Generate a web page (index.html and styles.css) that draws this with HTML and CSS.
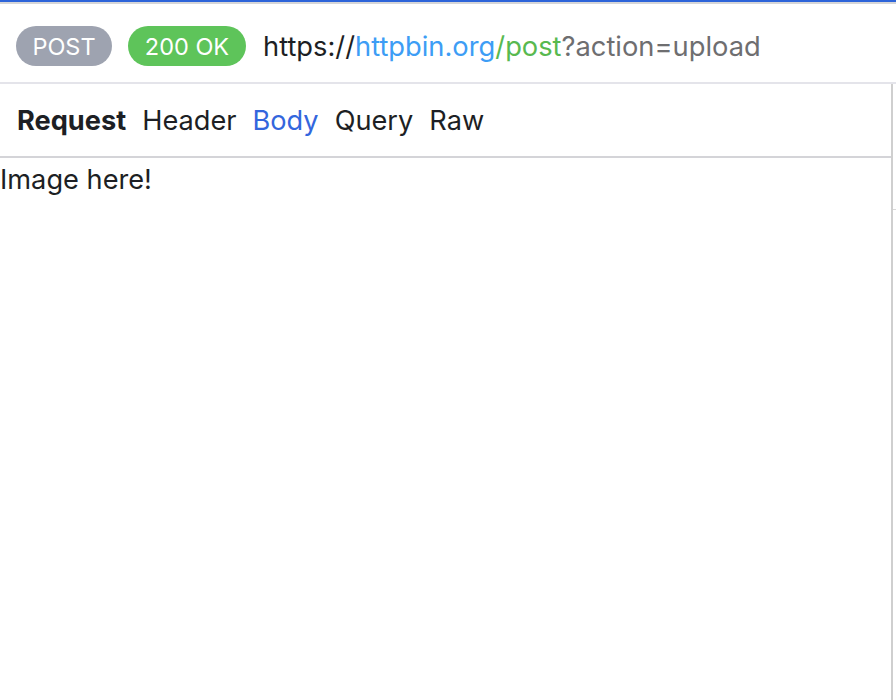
FILE: index.html
```html
<!DOCTYPE html>
<html>
<head>
<meta charset="utf-8">
<link rel="stylesheet" href="styles.css">
</head>
<body>
<div class="topbar"></div>
<header class="header">
  <span class="pill pill-method">POST</span>
  <span class="pill pill-status">200 OK</span>
  <span class="url"><span class="u-scheme">https://</span><span class="u-host">httpbin.org</span><span class="u-path">/post</span><span class="u-query">?action=upload</span></span>
</header>
<div class="panel">
  <nav class="tabs">
    <span class="tab tab-title">Request</span>
    <span class="tab">Header</span>
    <span class="tab tab-active">Body</span>
    <span class="tab">Query</span>
    <span class="tab">Raw</span>
  </nav>
  <div class="content">Image here!</div>
  <div class="tick"></div>
</div>
</body>
</html>
```
FILE: styles.css
```css
html, body {
  margin: 0;
  padding: 0;
  background: #ffffff;
}
body {
  font-family: Inter, "Liberation Sans", sans-serif;
  color: #1d1f24;
  height: 700px;
  overflow: hidden;
}
.topbar {
  height: 2px;
  background: #2d64d9;
  border-bottom: 2px solid #d6d6d8;
}
.header {
  display: flex;
  align-items: center;
  height: 72px;
  padding-top: 6px;
  padding-left: 16px;
  gap: 16px;
  border-bottom: 2px solid #e4e4ea;
}
.pill {
  display: flex;
  align-items: center;
  justify-content: center;
  height: 40px;
  border-radius: 20px;
  color: #ffffff;
  font-size: 23.5px;
  box-sizing: border-box;
}
.pill-method {
  width: 96px;
  background: #9ea3b0;
}
.pill-status {
  width: 118px;
  background: #5ec45a;
}
.url {
  font-size: 27.3px;
  margin-left: 1px;
}
.u-scheme { color: #1d1f24; }
.u-host { color: #3d9df5; }
.u-path { color: #58b94f; }
.u-query { color: #6e6e70; }
.panel {
  position: relative;
  width: 891px;
  height: 616px;
  border-right: 2px solid #cfcfcf;
}
.tabs {
  display: flex;
  align-items: center;
  height: 72px;
  padding-left: 17px;
  gap: 16px;
  border-bottom: 2px solid #d4d4d8;
  font-size: 27.2px;
}
.tab-title {
  font-weight: 700;
}
.tab-active {
  color: #3366dd;
}
.content {
  font-size: 27.2px;
  padding-top: 5px;
}
.tick {
  position: absolute;
  top: 125px;
  right: -5px;
  width: 3px;
  height: 1px;
  background: #d8d8d8;
}
```
